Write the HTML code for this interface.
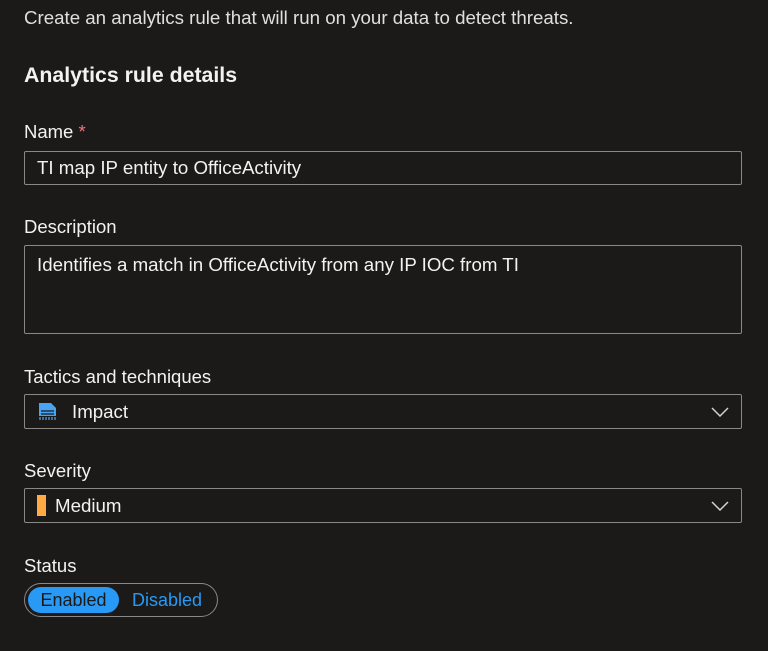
<!DOCTYPE html>
<html><head><style>
body{margin:0;width:768px;height:651px;background:#1b1a19;color:#f3f2f1;font-family:"Segoe UI","Liberation Sans",sans-serif;position:relative;overflow:hidden}
.t{position:absolute;left:24px;font-size:18.5px;white-space:nowrap}
.box{position:absolute;left:24px;width:718px;border:1px solid #8a8886;border-radius:2px;box-sizing:border-box}
.v{position:absolute;font-size:18.7px;white-space:nowrap}
.chev{position:absolute;right:12px;top:12px}
</style></head><body>
<div class="t" style="top:7px;font-size:18.7px;color:#e1dfdd">Create an analytics rule that will run on your data to detect threats.</div>
<div class="t" style="top:63px;font-size:21.3px;font-weight:bold">Analytics rule details</div>
<div class="t" style="top:121px">Name <span style="color:#f1707b">*</span></div>
<div class="box" style="top:151px;height:34px"><div class="v" style="left:12px;top:5px">TI map IP entity to OfficeActivity</div></div>
<div class="t" style="top:216px">Description</div>
<div class="box" style="top:245px;height:89px"><div class="v" style="left:12px;top:8px">Identifies a match in OfficeActivity from any IP IOC from TI</div></div>
<div class="t" style="top:366px">Tactics and techniques</div>
<div class="box" style="top:394px;height:35px">
<svg style="position:absolute;left:13px;top:7px" width="20" height="20" viewBox="0 0 20 20"><path d="M1 1h12l5 5v8H1z" fill="#4aa3f0"/><path d="M3 9h13M3 12h13" stroke="#1b1a19" stroke-width="1.2"/><path d="M2 15v3M5 15v3M8 15v3M11 15v3M14 15v3M17 15v3" stroke="#3a8fe0" stroke-width="1.5"/></svg>
<div class="v" style="left:47px;top:6px">Impact</div>
<svg class="chev" width="18" height="10" viewBox="0 0 18 10"><path d="M1 1l8 8 8-8" stroke="#d2d0ce" stroke-width="1.5" fill="none"/></svg></div>
<div class="t" style="top:460px">Severity</div>
<div class="box" style="top:488px;height:35px">
<div style="position:absolute;left:12px;top:6px;width:9px;height:21px;background:#ffaa44"></div>
<div class="v" style="left:30px;top:6px">Medium</div>
<svg class="chev" width="18" height="10" viewBox="0 0 18 10"><path d="M1 1l8 8 8-8" stroke="#d2d0ce" stroke-width="1.5" fill="none"/></svg></div>
<div class="t" style="top:555px">Status</div>
<div style="position:absolute;left:24px;top:583px;width:194px;height:34px;border:1px solid #8a8886;border-radius:17px;box-sizing:border-box">
<div style="position:absolute;left:3px;top:3px;width:91px;height:26px;background:#2899f5;border-radius:13px;color:#1b1a19;font-size:18px;text-align:center;line-height:26px">Enabled</div>
<div style="position:absolute;left:107px;top:3px;color:#2899f5;font-size:18px;line-height:26px">Disabled</div></div>
</body></html>
